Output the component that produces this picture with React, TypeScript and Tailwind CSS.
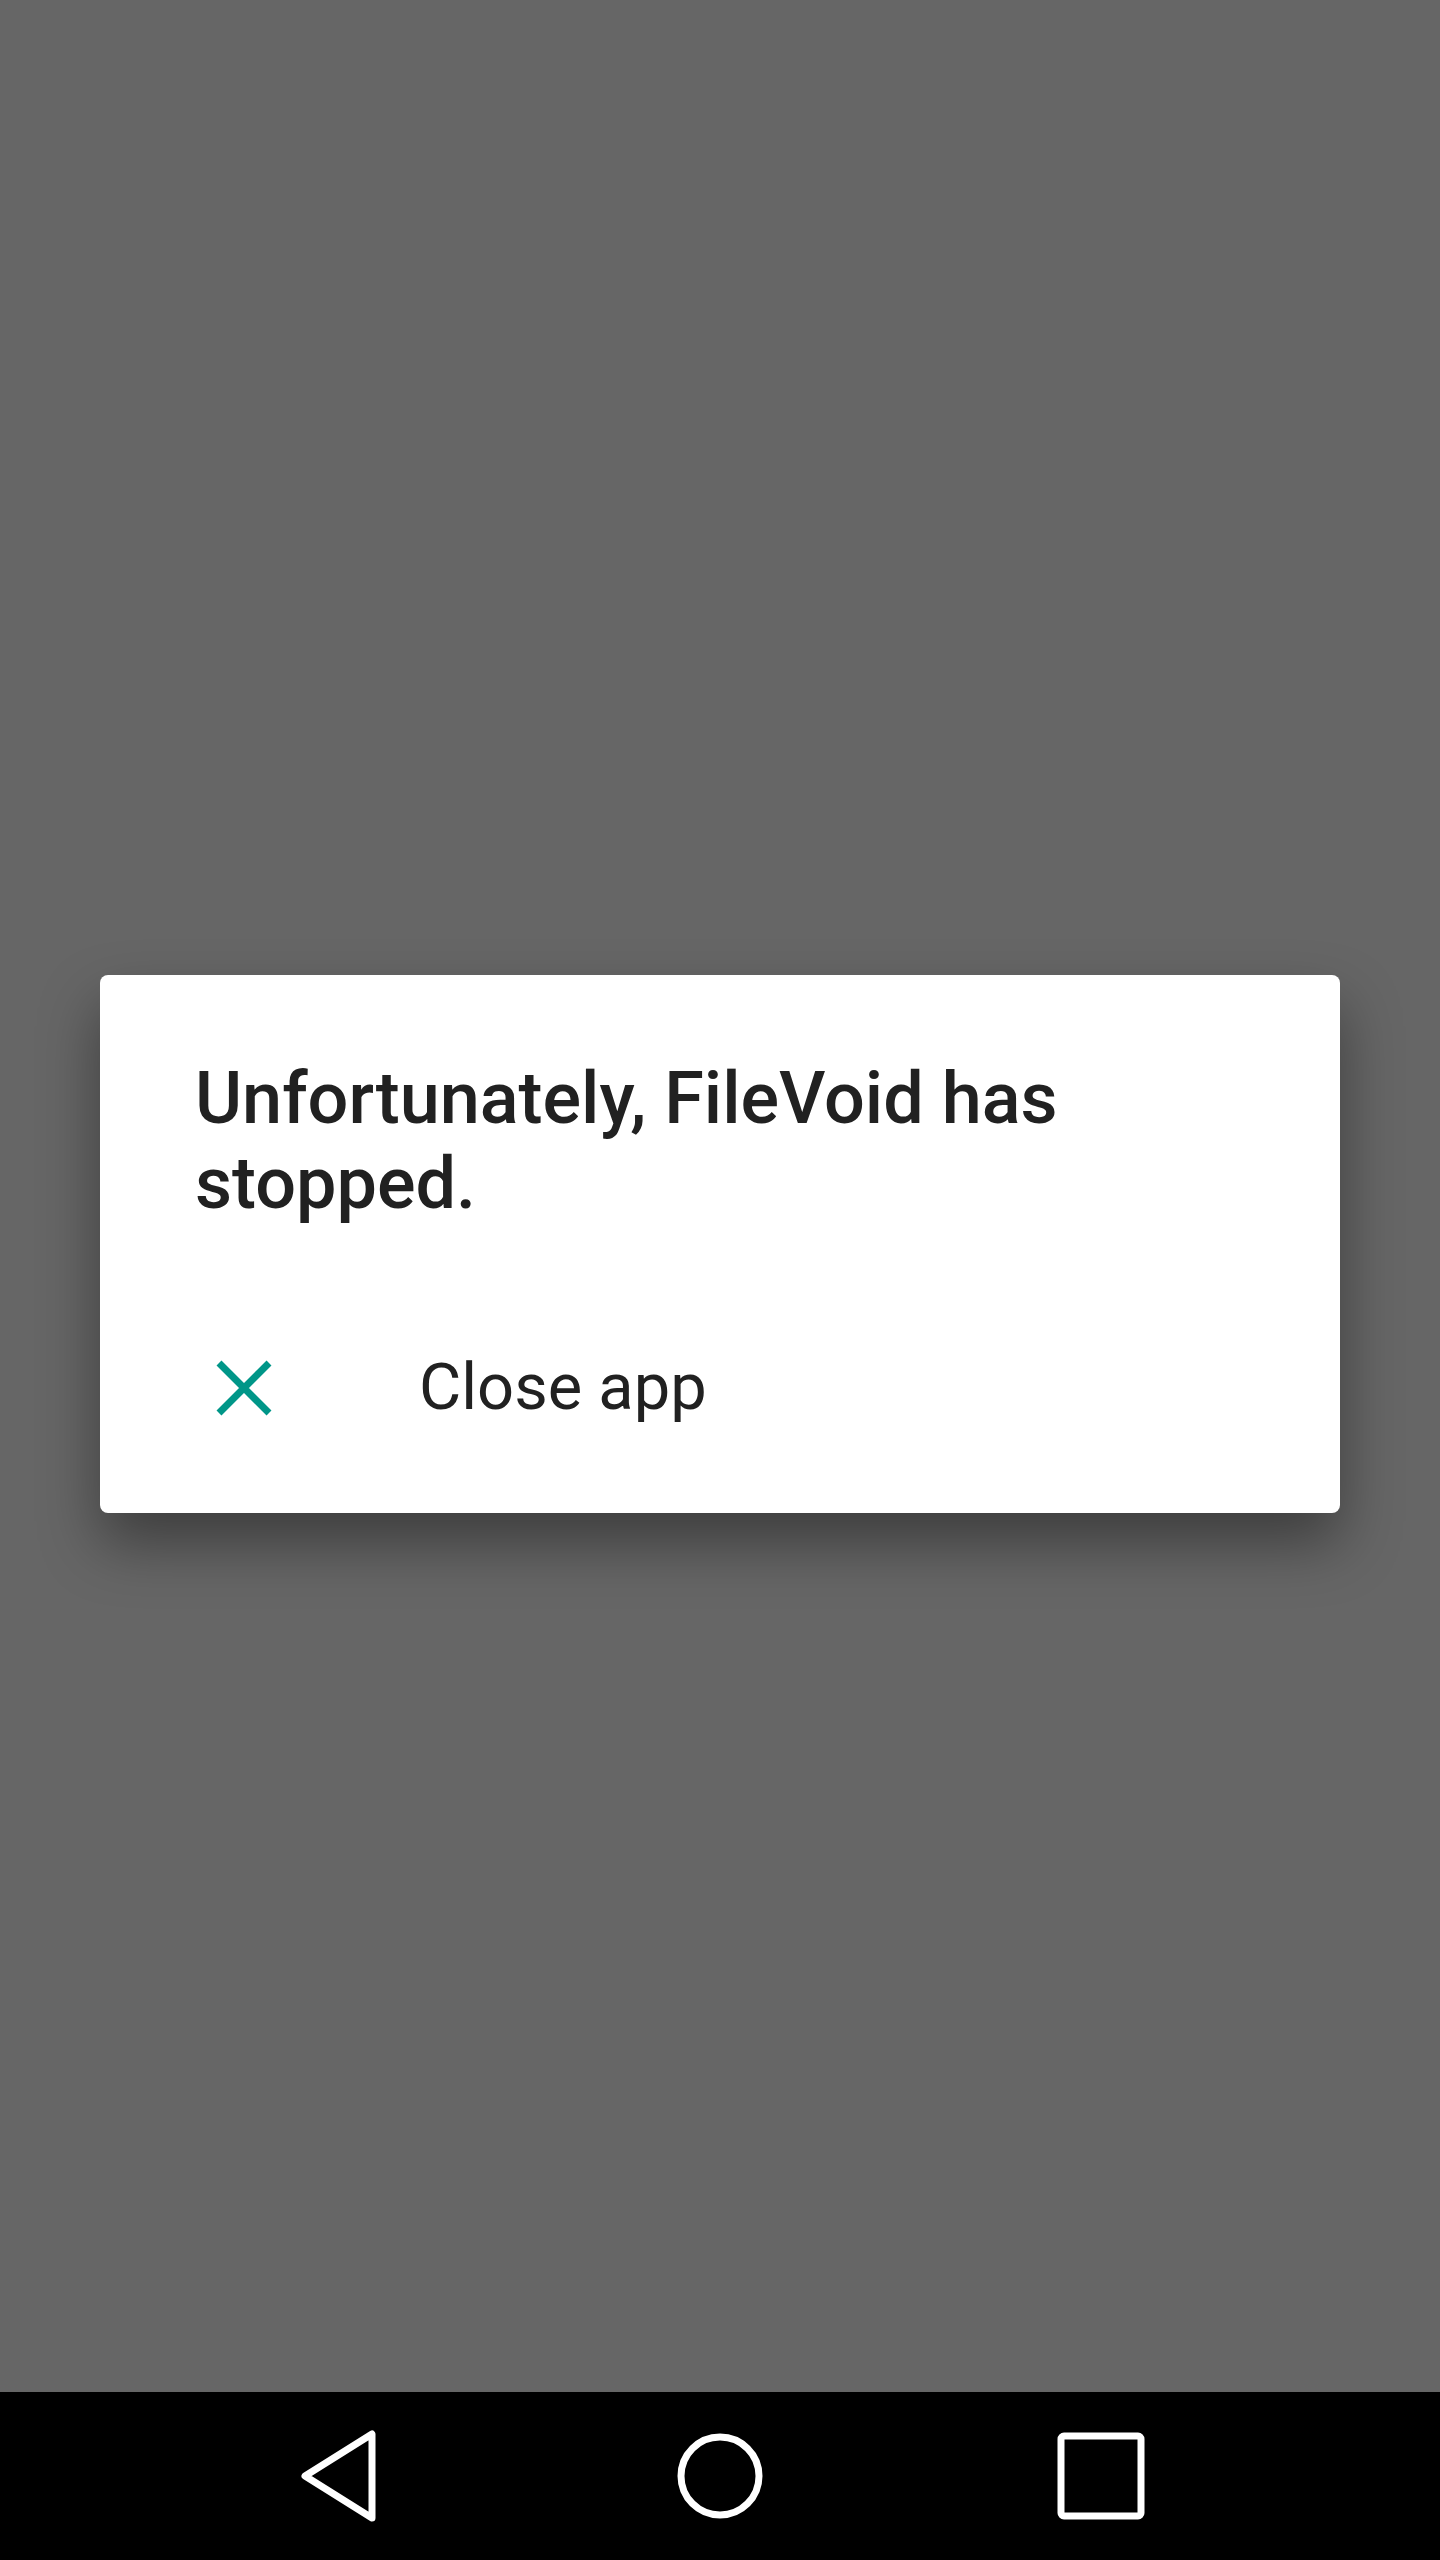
// Android "app has stopped" crash dialog over a dimmed screen

function CloseIcon() {
  return (
    <svg width="56" height="56" viewBox="0 0 56 56" fill="none">
      <path d="M3 3 L53 53 M53 3 L3 53" stroke="#009688" strokeWidth="7" />
    </svg>
  );
}

function NavBar() {
  return (
    <div className="h-[168px] bg-black flex items-center justify-center">
      <div className="w-[381px] flex justify-center">
        <svg width="80" height="92" viewBox="0 0 80 92" fill="none">
          <path
            d="M73 4 L73 88 L6 46 Z"
            stroke="white"
            strokeWidth="7"
            strokeLinejoin="round"
          />
        </svg>
      </div>
      <div className="w-[381px] flex justify-center">
        <svg width="88" height="88" viewBox="0 0 88 88" fill="none">
          <circle cx="44" cy="44" r="39" stroke="white" strokeWidth="7" />
        </svg>
      </div>
      <div className="w-[381px] flex justify-center">
        <svg width="88" height="88" viewBox="0 0 88 88" fill="none">
          <rect x="4" y="4" width="80" height="80" rx="3" stroke="white" strokeWidth="7" />
        </svg>
      </div>
    </div>
  );
}

export default function App() {
  return (
    <div className="w-[1440px] h-[2560px] flex flex-col font-['Roboto',sans-serif] text-[#212121]">
      {/* Dimmed background with dialog */}
      <div className="flex-1 bg-[#666666] flex items-center justify-center pt-[96px]">
        <div className="w-[1240px] h-[538px] bg-white rounded-[8px] shadow-[0_30px_60px_rgba(0,0,0,0.4)] flex flex-col">
          <h1 className="pl-[95px] pt-[81px] pr-[80px] text-[72px] leading-[85px] font-medium">
            Unfortunately, FileVoid has stopped.
          </h1>
          <div className="mt-[122px] pl-[116px] flex items-center gap-[147px]">
            <CloseIcon />
            <span className="text-[65px] leading-[79px]">Close app</span>
          </div>
        </div>
      </div>
      <NavBar />
    </div>
  );
}
